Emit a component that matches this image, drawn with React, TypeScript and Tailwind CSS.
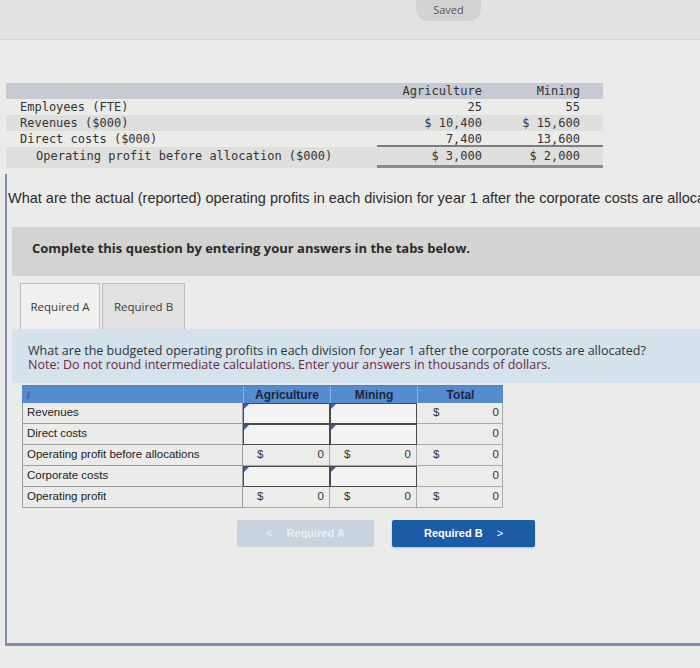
import React from 'react'

type Cell = { kind: 'input' } | { kind: 'calc'; dollar: boolean }

const rows: { label: string; agri: Cell; mining: Cell; total: Cell }[] = [
  { label: 'Revenues', agri: { kind: 'input' }, mining: { kind: 'input' }, total: { kind: 'calc', dollar: true } },
  { label: 'Direct costs', agri: { kind: 'input' }, mining: { kind: 'input' }, total: { kind: 'calc', dollar: false } },
  { label: 'Operating profit before allocations', agri: { kind: 'calc', dollar: true }, mining: { kind: 'calc', dollar: true }, total: { kind: 'calc', dollar: true } },
  { label: 'Corporate costs', agri: { kind: 'input' }, mining: { kind: 'input' }, total: { kind: 'calc', dollar: false } },
  { label: 'Operating profit', agri: { kind: 'calc', dollar: true }, mining: { kind: 'calc', dollar: true }, total: { kind: 'calc', dollar: true } },
]

function AnswerCell({ cell, total }: { cell: Cell; total?: boolean }) {
  if (cell.kind === 'input') {
    return (
      <div className="relative w-[87px] h-full bg-[#f3f3f2] border-[1.5px] border-[#4b4b4b]">
        <span className="absolute left-0 top-0 w-0 h-0 border-t-[5px] border-r-[5px] border-t-[#2e63b3] border-r-transparent" />
      </div>
    )
  }
  return (
    <div
      className={
        'flex items-center justify-between h-full bg-[#ececeb] border-r border-b border-[#a9a9a9] text-[11.5px] text-[#333] ' +
        (total ? 'w-[86px] pl-[16px] pr-[3px]' : 'w-[87px] pl-[14px] pr-[5px]')
      }
    >
      <span>{cell.dollar ? '$' : ''}</span>
      <span>0</span>
    </div>
  )
}

export default function App() {
  return (
    <div className="w-[700px] h-[668px] overflow-hidden bg-[#ebebea] font-['Liberation_Sans',Arial,sans-serif]">
      {/* top bar */}
      <div className="h-[40px] bg-[#e2e2e1] border-b border-[#d3d3d2]">
        <div className="ml-[416px] w-[65px] h-[21px] rounded-b-[12px] bg-[#d3d3d3] flex items-center justify-center text-[11px] text-[#555] font-['Open_Sans',sans-serif]">
          Saved
        </div>
      </div>

      {/* given data */}
      <div className="mt-[43px] ml-[6px] w-[597px] font-['DejaVu_Sans_Mono',monospace] text-[12px] text-[#333] leading-[16px]">
        <div className="flex h-[16px] bg-[#c7cad2]">
          <div className="w-[371px]" />
          <div className="w-[113px] text-right pr-[8px]">Agriculture</div>
          <div className="w-[113px] text-right pr-[23px]">Mining</div>
        </div>
        <div className="flex h-[16px]">
          <div className="w-[371px] pl-[14px]">Employees (FTE)</div>
          <div className="w-[113px] text-right pr-[8px]">25</div>
          <div className="w-[113px] text-right pr-[23px]">55</div>
        </div>
        <div className="flex h-[16px] bg-[#dfdfde]">
          <div className="w-[371px] pl-[14px]">Revenues ($000)</div>
          <div className="w-[113px] text-right pr-[8px]">$ 10,400</div>
          <div className="w-[113px] text-right pr-[23px]">$ 15,600</div>
        </div>
        <div className="flex h-[16px]">
          <div className="w-[371px] pl-[14px]">Direct costs ($000)</div>
          <div className="w-[113px] text-right pr-[8px] border-b-[2px] border-[#7d7d7d]">7,400</div>
          <div className="w-[113px] text-right pr-[23px] border-b-[2px] border-[#7d7d7d]">13,600</div>
        </div>
        <div className="flex h-[21px] bg-[#dfdfde] leading-[18px]">
          <div className="w-[371px] pl-[30px]">Operating profit before allocation ($000)</div>
          <div className="w-[113px] text-right pr-[8px] border-b-[3px] border-[#8b8b8b]">$ 3,000</div>
          <div className="w-[113px] text-right pr-[23px] border-b-[3px] border-[#8b8b8b]">$ 2,000</div>
        </div>
      </div>

      {/* question panel */}
      <div className="mt-[6px] ml-[5px] h-[472px] border-l-[2px] border-b-[3px] border-[#7f8db4]">
        <div className="pt-[16px] pl-[1px] text-[14.5px] leading-[16px] text-[#2b2b2b] whitespace-nowrap">
          What are the actual (reported) operating profits in each division for year 1 after the corporate costs are allocated?
        </div>

        <div className="mt-[21px] ml-[5px] h-[49px] bg-[#d3d3d2] pl-[20px] pt-[13px] font-['Open_Sans',sans-serif] font-bold text-[13px] leading-[16px] text-[#2a2a2a]">
          Complete this question by entering your answers in the tabs below.
        </div>

        {/* tabs */}
        <div className="mt-[7px] ml-[13px] flex gap-[2px] font-['Open_Sans',sans-serif] text-[11.5px] text-[#3a3a3a]">
          <div className="w-[80px] h-[46px] flex items-center justify-center bg-[#f0f0ef] border border-b-0 border-[#bdbdbd]">
            Required A
          </div>
          <div className="w-[83px] h-[46px] flex items-center justify-center bg-[#e1e1e0] border border-b-0 border-[#bdbdbd]">
            Required B
          </div>
        </div>

        <div className="ml-[5px] h-[54px] bg-[#d4e2ec] pl-[16px] pt-[15px] font-['Open_Sans',sans-serif] text-[12.5px] leading-[14px] whitespace-nowrap">
          <div className="text-[#2f3338]">
            What are the budgeted operating profits in each division for year 1 after the corporate costs are allocated?
          </div>
          <div className="text-[#6e2a3b]">
            Note: Do not round intermediate calculations. Enter your answers in thousands of dollars.
          </div>
        </div>

        {/* answer table */}
        <div className="mt-[2px] ml-[15px] w-[481px]">
          <div className="flex h-[18px] bg-[#558bd1] border-t border-[#4d7fc2] text-[12px] leading-[19px] font-bold text-[#1c2738]">
            <div className="w-[221px] pl-[5px] text-[10px] font-normal text-[#2c3e5c]">/</div>
            <div className="w-[87px] border-l border-[#8fb3e0] text-center">Agriculture</div>
            <div className="w-[87px] border-l border-[#8fb3e0] text-center">Mining</div>
            <div className="w-[86px] border-l border-[#8fb3e0] text-center">Total</div>
          </div>
          {rows.map(r => (
            <div key={r.label} className="flex h-[21px]">
              <div className="w-[221px] h-full bg-[#ebebea] border-l border-r border-b border-[#9d9d9d] pl-[4px] text-[11.5px] leading-[19px] text-[#222]">
                {r.label}
              </div>
              <AnswerCell cell={r.agri} />
              <AnswerCell cell={r.mining} />
              <AnswerCell cell={r.total} total />
            </div>
          ))}
        </div>

        {/* nav buttons */}
        <div className="mt-[12px] ml-[230px] flex gap-[18px] text-[11px] font-bold">
          <div className="w-[137px] h-[27px] rounded-[2px] bg-[#c7d3dd] text-[#e9eef2] flex items-center justify-center gap-[14px]">
            <span className="font-normal">&lt;</span>
            <span>Required A</span>
          </div>
          <div className="w-[143px] h-[27px] rounded-[2px] bg-[#1c5ca6] text-white flex items-center justify-center gap-[14px] shadow-[0_1px_2px_rgba(0,0,0,0.2)]">
            <span>Required B</span>
            <span className="font-normal">&gt;</span>
          </div>
        </div>
      </div>
    </div>
  )
}
